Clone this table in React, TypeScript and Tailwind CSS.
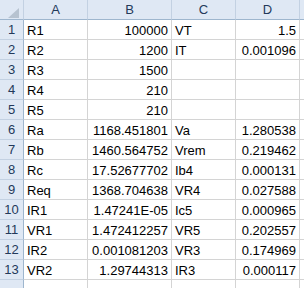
import React from "react";

const rows: [string, string, string, string][] = [
  ["R1", "100000", "VT", "1.5"],
  ["R2", "1200", "IT", "0.001096"],
  ["R3", "1500", "", ""],
  ["R4", "210", "", ""],
  ["R5", "210", "", ""],
  ["Ra", "1168.451801", "Va", "1.280538"],
  ["Rb", "1460.564752", "Vrem", "0.219462"],
  ["Rc", "17.52677702", "Ib4", "0.000131"],
  ["Req", "1368.704638", "VR4", "0.027588"],
  ["IR1", "1.47241E-05", "Ic5", "0.000965"],
  ["VR1", "1.472412257", "VR5", "0.202557"],
  ["IR2", "0.001081203", "VR3", "0.174969"],
  ["VR2", "1.29744313", "IR3", "0.000117"],
  ["", "", "", ""],
];

const font = { fontFamily: '"Liberation Sans", Arial, sans-serif' };

export default function App() {
  return (
    <div className="w-[304px] h-[288px] overflow-hidden bg-white text-[13px] text-black" style={font}>
      <div className="grid grid-cols-[24px_64px_84px_64px_64px_4px]">
        {/* header */}
        <div className="h-[20px] bg-[#dfe8f4] border-r border-b border-r-[#c3d1e2] border-b-[#9eb6ce] relative">
          <div className="absolute left-[8px] top-[8px] w-0 h-0 border-l-[11px] border-l-transparent border-b-[10px] border-b-[#b7c3d0]" />
        </div>
        {["A", "B", "C", "D"].map((c) => (
          <div key={c} className="h-[20px] bg-[#dfe8f4] border-r border-b border-r-[#c3d1e2] border-b-[#9eb6ce] flex items-center justify-center text-[#23395a] leading-[20px]">
            {c}
          </div>
        ))}
        <div className="h-[20px] bg-[#dfe8f4] border-b border-b-[#9eb6ce]" />
        {rows.map((r, i) => (
          <React.Fragment key={i}>
            <div className="h-[20px] bg-[#dfe8f4] border-r border-b border-r-[#9eb6ce] border-b-[#c3d1e2] flex items-center justify-center text-[#23395a] leading-[20px] pt-[1px]">
              {i < 13 ? i + 1 : ""}
            </div>
            <div className="h-[20px] border-r border-b border-[#d4d4d4] pl-[3px] leading-[20px] pt-[1px] whitespace-nowrap overflow-hidden">{r[0]}</div>
            <div className="h-[20px] border-r border-b border-[#d4d4d4] pr-[3px] text-right leading-[20px] pt-[1px] whitespace-nowrap overflow-hidden">{r[1]}</div>
            <div className="h-[20px] border-r border-b border-[#d4d4d4] pl-[3px] leading-[20px] pt-[1px] whitespace-nowrap overflow-hidden">{r[2]}</div>
            <div className="h-[20px] border-r border-b border-[#d4d4d4] pr-[3px] text-right leading-[20px] pt-[1px] whitespace-nowrap overflow-hidden">{r[3]}</div>
            <div className="h-[20px] border-b border-[#d4d4d4]" />
          </React.Fragment>
        ))}
      </div>
    </div>
  );
}
